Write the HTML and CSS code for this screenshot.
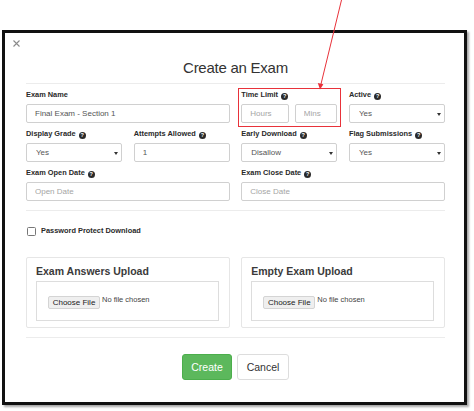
FILE: index.html
```html
<!DOCTYPE html>
<html lang="en">
<head>
<meta charset="utf-8">
<title>Create an Exam</title>
<link rel="stylesheet" href="styles.css">
</head>
<body>
<div class="modal">
  <button class="close" aria-label="Close">
    <svg width="7" height="7" viewBox="0 0 7 7"><path d="M0.5 0.5 L6.5 6.5 M6.5 0.5 L0.5 6.5" stroke="#8a8a8a" stroke-width="1.1" fill="none"/></svg>
  </button>
  <h1 class="title">Create an Exam</h1>
  <hr class="divider">
  <div class="fields">
    <div class="field span2">
      <label class="lbl">Exam Name</label>
      <input class="ctl" type="text" value="Final Exam - Section 1">
    </div>
    <div class="field">
      <label class="lbl">Time Limit <span class="q">?</span></label>
      <div class="pair">
        <input class="ctl hours" type="text" placeholder="Hours">
        <input class="ctl mins" type="text" placeholder="Mins">
      </div>
    </div>
    <div class="field">
      <label class="lbl">Active <span class="q">?</span></label>
      <div class="sel"><select class="ctl"><option>Yes</option></select></div>
    </div>

    <div class="field">
      <label class="lbl">Display Grade <span class="q">?</span></label>
      <div class="sel"><select class="ctl"><option>Yes</option></select></div>
    </div>
    <div class="field">
      <label class="lbl">Attempts Allowed <span class="q">?</span></label>
      <input class="ctl" type="text" value="1">
    </div>
    <div class="field">
      <label class="lbl">Early Download <span class="q">?</span></label>
      <div class="sel"><select class="ctl"><option>Disallow</option></select></div>
    </div>
    <div class="field">
      <label class="lbl">Flag Submissions <span class="q">?</span></label>
      <div class="sel"><select class="ctl"><option>Yes</option></select></div>
    </div>

    <div class="field span2">
      <label class="lbl">Exam Open Date <span class="q">?</span></label>
      <input class="ctl" type="text" placeholder="Open Date">
    </div>
    <div class="field span2">
      <label class="lbl">Exam Close Date <span class="q">?</span></label>
      <input class="ctl" type="text" placeholder="Close Date">
    </div>
  </div>
  <hr class="divider after-fields">

  <label class="check-row"><span class="box"></span><span class="lbl">Password Protect Download</span></label>

  <div class="uploads">
    <div class="panel">
      <div class="panel-title">Exam Answers Upload</div>
      <div class="panel-body">
        <button class="file-btn">Choose File</button><span class="file-name">No file chosen</span>
      </div>
    </div>
    <div class="panel">
      <div class="panel-title">Empty Exam Upload</div>
      <div class="panel-body">
        <button class="file-btn">Choose File</button><span class="file-name">No file chosen</span>
      </div>
    </div>
  </div>
  <hr class="divider after-uploads">

  <div class="footer">
    <button class="btn btn-create">Create</button>
    <button class="btn btn-cancel">Cancel</button>
  </div>
</div>

<div class="highlight"></div>
<svg class="arrow" width="474" height="100" viewBox="0 0 474 100">
  <line x1="341.5" y1="0" x2="321" y2="84" stroke="#e8323a" stroke-width="1"/>
  <polygon points="320,89.5 317.8,83 323.4,84.3" fill="#e8323a"/>
</svg>
</body>
</html>
```

FILE: styles.css
```css
html, body {
  margin: 0;
  padding: 0;
  background: #ffffff;
}
body {
  font-family: "Liberation Sans", Arial, sans-serif;
  color: #333333;
  position: relative;
  width: 474px;
  height: 411px;
  overflow: hidden;
}
.modal {
  box-sizing: border-box;
  width: 465px;
  margin: 30px 0 0 2px;
  border: 3px solid #111111;
  padding: 0 19px 22px 21px;
  background: #ffffff;
  box-shadow: 2px 2px 2px rgba(0, 0, 0, 0.35);
}
.close {
  display: flex;
  align-items: center;
  justify-content: center;
  height: 20px;
  width: 9px;
  margin-left: -14px;
  padding: 0;
  border: 0;
  background: transparent;
}
.title {
  margin: 5px 0 0;
  font-size: 15px;
  line-height: 20px;
  font-weight: normal;
  text-align: center;
  letter-spacing: -0.25px;
  color: #333333;
}
.divider {
  border: 0;
  border-top: 1px solid #ececec;
  margin: 5px 0 0;
  height: 0;
}
.divider.after-fields { margin-top: 9px; }
.divider.after-uploads { margin-top: 9px; }

.fields {
  display: grid;
  grid-template-columns: repeat(4, 1fr);
  column-gap: 11.5px;
  row-gap: 5px;
  padding-top: 5px;
}
.field {
  display: flex;
  flex-direction: column;
  min-width: 0;
}
.span2 { grid-column: span 2; }
.lbl {
  font-size: 7.4px;
  font-weight: bold;
  line-height: 12px;
  height: 12px;
  margin-bottom: 3px;
  color: #2a2a2a;
  white-space: nowrap;
}
.q {
  display: inline-block;
  width: 7px;
  height: 7px;
  border-radius: 50%;
  background: #2a2a2a;
  color: #ffffff;
  font-size: 5.5px;
  line-height: 7px;
  text-align: center;
  vertical-align: -1px;
  margin-left: 1px;
}
.ctl {
  display: block;
  box-sizing: border-box;
  width: 100%;
  height: 19px;
  margin: 0;
  padding: 0 8px;
  border: 1px solid #d0d0d0;
  border-radius: 2px;
  font-family: "Liberation Sans", Arial, sans-serif;
  font-size: 8px;
  color: #555555;
  background: #ffffff;
  outline: none;
}
.ctl::placeholder { color: #a5a5a5; }
.pair {
  display: flex;
  gap: 5.5px;
}
.pair .hours { flex: 0 0 48px; }
.pair .mins { flex: 1 1 auto; width: auto; min-width: 0; }
.sel {
  position: relative;
  height: 19px;
}
.sel select {
  -webkit-appearance: none;
  appearance: none;
  padding-left: 9px;
}
.sel::after {
  content: "";
  position: absolute;
  right: 4px;
  top: 8.5px;
  border-left: 2px solid transparent;
  border-right: 2px solid transparent;
  border-top: 3px solid #333333;
}

.check-row {
  display: flex;
  align-items: center;
  gap: 5px;
  height: 12px;
  margin-top: 14px;
  padding-left: 1px;
}
.check-row .box {
  box-sizing: border-box;
  width: 9px;
  height: 9px;
  border: 1px solid #777777;
  border-radius: 1.5px;
  background: #ffffff;
}
.check-row .lbl {
  margin: 0;
}

.uploads {
  display: grid;
  grid-template-columns: 1fr 1fr;
  column-gap: 11.5px;
  margin-top: 20px;
}
.panel {
  border: 1px solid #e6e6e6;
  border-radius: 2px;
  padding: 6px 10px 6px 9px;
}
.panel-title {
  font-size: 10.5px;
  font-weight: bold;
  line-height: 14px;
  margin-bottom: 3px;
  color: #3a3a3a;
}
.panel-body {
  display: flex;
  align-items: flex-start;
  border: 1px solid #dddddd;
  padding: 14px 11px 11px;
}
.file-btn {
  box-sizing: border-box;
  height: 13px;
  width: 52px;
  padding: 0;
  margin: 0 2px 0 0;
  border: 1px solid #d4d4d4;
  border-radius: 2px;
  background: #efefef;
  font-family: "Liberation Sans", Arial, sans-serif;
  font-size: 8px;
  color: #222222;
  line-height: 11px;
}
.file-name {
  font-size: 7.5px;
  line-height: 8px;
  color: #444444;
}

.footer {
  display: flex;
  justify-content: center;
  gap: 5px;
  margin-top: 16px;
}
.btn {
  box-sizing: border-box;
  height: 26px;
  border-radius: 3px;
  font-family: "Liberation Sans", Arial, sans-serif;
  font-size: 10.5px;
  padding: 0;
}
.btn-create {
  width: 50px;
  background: #5cb85c;
  border: 1px solid #4cae4c;
  color: #ffffff;
}
.btn-cancel {
  width: 52px;
  background: #ffffff;
  border: 1px solid #dddddd;
  color: #333333;
}

.highlight {
  position: absolute;
  left: 238px;
  top: 88px;
  width: 103px;
  height: 39px;
  box-sizing: border-box;
  border: 1.5px solid #e8323a;
  pointer-events: none;
}
.arrow {
  position: absolute;
  left: 0;
  top: 0;
  pointer-events: none;
}
```
